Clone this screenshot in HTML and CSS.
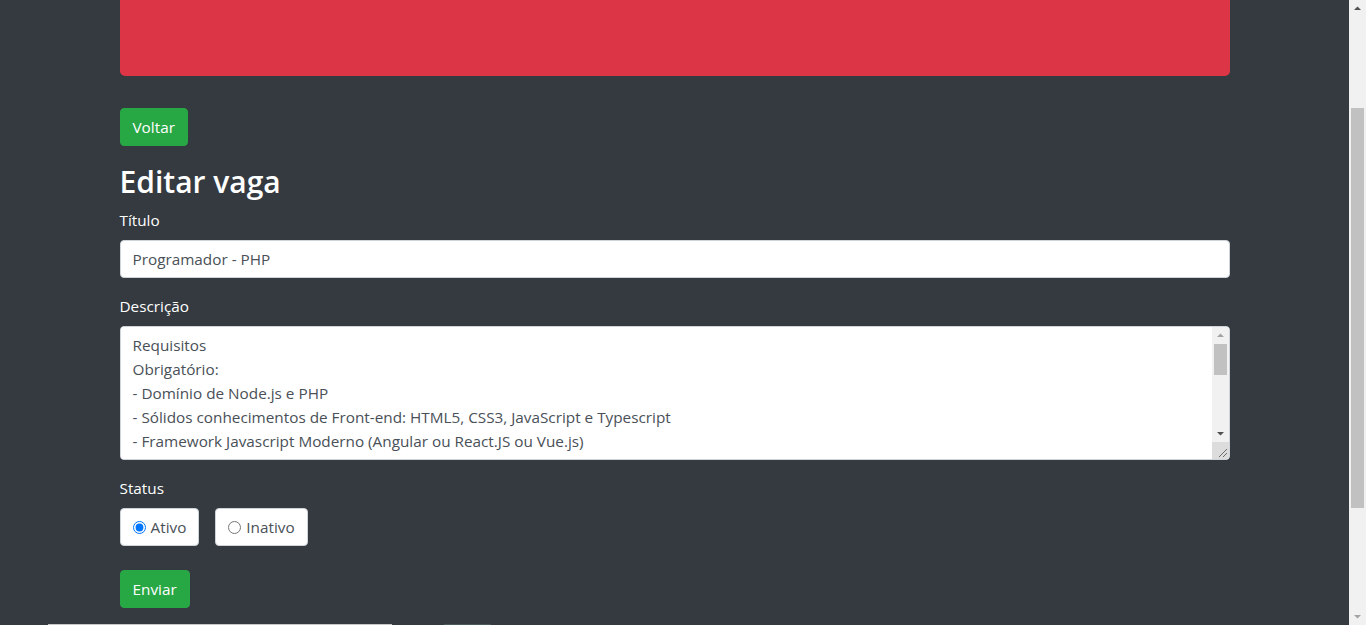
FILE: index.html
```html
<!DOCTYPE html>
<html lang="pt-BR">
<head>
<meta charset="utf-8">
<title>Editar vaga</title>
<link rel="stylesheet" href="styles.css">
</head>
<body>
<div class="app">
  <main class="page">
    <div class="container">
      <div class="banner"></div>
      <a class="btn btn-success" href="#">Voltar</a>
      <h2 class="title">Editar vaga</h2>
      <form class="form">
        <div class="group">
          <label class="label" for="titulo">Título</label>
          <input class="control" id="titulo" type="text" value="Programador - PHP">
        </div>
        <div class="group">
          <label class="label" for="descricao">Descrição</label>
          <div class="textarea-wrap">
            <textarea class="textarea" id="descricao" rows="5">Requisitos
Obrigatório:
- Domínio de Node.js e PHP
- Sólidos conhecimentos de Front-end: HTML5, CSS3, JavaScript e Typescript
- Framework Javascript Moderno (Angular ou React.JS ou Vue.js)
- Experiência com banco de dados MySQL
- Versionamento com Git
Desejável:
- Conhecimento em Docker
- Metodologias ágeis</textarea>
            <div class="mini-scroll">
              <div class="sb-btn"><svg width="17" height="17" viewBox="0 0 17 17"><polygon points="5,10 12,10 8.5,6.5" fill="#a3a3a3"/></svg></div>
              <div class="sb-track"><div class="sb-thumb small"></div></div>
              <div class="sb-btn"><svg width="17" height="17" viewBox="0 0 17 17"><polygon points="5,7 12,7 8.5,10.5" fill="#505050"/></svg></div>
              <div class="sb-corner"><svg width="17" height="17" viewBox="0 0 17 17"><line x1="7" y1="15" x2="15" y2="7" stroke="#6b6b6b" stroke-width="1"/><line x1="11" y1="15" x2="15" y2="11" stroke="#6b6b6b" stroke-width="1"/></svg></div>
            </div>
          </div>
        </div>
        <div class="group">
          <span class="label">Status</span>
          <div class="radios">
            <label class="radio-box"><input class="radio" type="radio" name="status" value="1" checked> Ativo</label>
            <label class="radio-box"><input class="radio" type="radio" name="status" value="0"> Inativo</label>
          </div>
        </div>
        <button class="btn btn-success" type="submit">Enviar</button>
      </form>
    </div>
    <div class="bottom-strip"><span class="strip-a"></span><span class="strip-b"></span></div>
  </main>
  <div class="page-scroll">
    <div class="sb-btn"><svg width="17" height="17" viewBox="0 0 17 17"><polygon points="5,10 12,10 8.5,6.5" fill="#505050"/></svg></div>
    <div class="sb-track page-track"><div class="sb-thumb big"></div></div>
    <div class="sb-btn"><svg width="17" height="17" viewBox="0 0 17 17"><polygon points="5,7 12,7 8.5,10.5" fill="#a3a3a3"/></svg></div>
  </div>
</div>
</body>
</html>
```

FILE: styles.css
```css
* { box-sizing: border-box; }
html, body { margin: 0; padding: 0; height: 100%; overflow: hidden; }
body {
  background: #343a40;
  font-family: "Open Sans", "Liberation Sans", sans-serif;
  font-size: 15.3px;
  line-height: 24px;
  color: #fff;
}
.app { display: flex; height: 625px; }
.page { flex: 1; display: flex; flex-direction: column; justify-content: space-between; }
.container { width: 1110px; margin: 0 auto; }
.banner {
  height: 76px;
  background: #dc3545;
  border-radius: 0 0 5px 5px;
  margin-bottom: 32px;
}
.btn {
  display: inline-block;
  padding: 6px 12px;
  font-family: inherit;
  font-size: 15.3px;
  line-height: 24px;
  border-radius: 4px;
  border: 1px solid transparent;
  text-decoration: none;
  cursor: pointer;
}
.btn-success { background: #28a745; border-color: #28a745; color: #fff; }
.title {
  margin: 16px 0 8px;
  font-size: 30px;
  line-height: 38px;
  font-weight: 600;
  color: #fff;
  position: relative;
  top: 1px;
}
.form { margin: 0; }
.group { margin-bottom: 16px; }
.label { display: block; margin-bottom: 8px; font-size: 15.3px; line-height: 24px; }
.control {
  display: block;
  width: 100%;
  height: 38px;
  padding: 6px 12px;
  font-family: inherit;
  font-size: 15.3px;
  line-height: 24px;
  color: #495057;
  background: #fff;
  border: 1px solid #ced4da;
  border-radius: 4px;
  outline: none;
}
.textarea-wrap {
  display: flex;
  height: 134px;
  border: 1px solid #ced4da;
  border-radius: 4px;
  background: #fff;
  overflow: hidden;
}
.textarea {
  flex: 1;
  border: 0;
  outline: none;
  resize: none;
  overflow: hidden;
  padding: 6px 12px;
  font-family: inherit;
  font-size: 15.3px;
  line-height: 24px;
  color: #495057;
  background: #fff;
}
.mini-scroll { width: 17px; display: flex; flex-direction: column; background: #f1f1f1; }
.sb-btn { height: 17px; display: flex; }
.sb-track { flex: 1; display: flex; flex-direction: column; }
.sb-thumb { background: #c1c1c1; margin: 0 2px; }
.sb-thumb.small { height: 31px; }
.sb-corner { height: 17px; background: #dcdcdc; display: flex; }
.radios { display: flex; gap: 16px; margin-bottom: 24px; }
.radio-box {
  display: flex;
  align-items: center;
  gap: 5px;
  height: 38px;
  padding: 0 12px;
  background: #fff;
  color: #495057;
  border: 1px solid #ced4da;
  border-radius: 4px;
  font-size: 15.3px;
}
.radio { margin: 0; width: 13px; height: 13px; }
.bottom-strip { height: 1px; display: flex; }
.strip-a { margin-left: 48px; width: 344px; background: #c8c8c8; }
.strip-b { margin-left: 52px; width: 47px; background: #4a5a5a; }
.page-scroll { width: 17px; background: #f1f1f1; display: flex; flex-direction: column; }
.page-track { padding-top: 91px; }
.sb-thumb.big { height: 400px; }
```
